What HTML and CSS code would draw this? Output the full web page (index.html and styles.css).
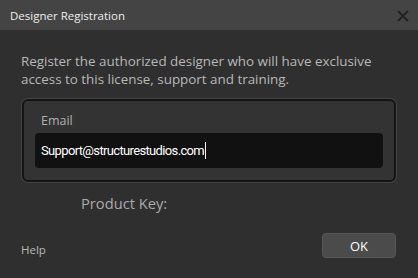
FILE: index.html
```html
<!DOCTYPE html>
<html lang="en">
<head>
  <meta charset="UTF-8" />
  <title>Designer Registration</title>
  <link rel="stylesheet" href="styles.css">
</head>
<body>
  <div class="dialog">
    <!-- Title bar -->
    <div class="titlebar">
      <span class="title">Designer Registration</span>
      <svg class="close" width="12" height="12" viewBox="0 0 12 12">
        <path d="M1 1 L11 11 M11 1 L1 11" stroke="#222" stroke-width="2" fill="none" />
      </svg>
    </div>

    <div class="content">
      <p class="intro">Register the authorized designer who will have exclusive access to this license, support and training.</p>

      <div class="group">
        <div class="label">Email</div>
        <div class="input">Support@structurestudios.com<span class="caret"></span></div>
      </div>

      <div class="product-key">Product Key:</div>

      <div class="footer">
        <span class="help">Help</span>
        <button class="ok">OK</button>
      </div>
    </div>
  </div>
</body>
</html>
```

FILE: styles.css
```css
body {
  margin: 0;
  background-color: #2f2f2f;
  font-family: 'Open Sans', 'Noto Sans', sans-serif;
  overflow: hidden;
}
.dialog {
  width: 418px;
  height: 278px;
  display: flex;
  flex-direction: column;
}
/* Title bar */
.titlebar {
  height: 30px;
  background-color: #444444;
  display: flex;
  align-items: center;
  justify-content: space-between;
  padding: 0 9px 0 10px;
}
.title {
  color: #eeeeee;
  font-size: 11.5px;
}
.close {
  margin-top: 1px;
}
.content {
  flex: 1;
  display: flex;
  flex-direction: column;
  padding: 0 22px 0 21px;
}
.intro {
  margin: 22px 0 0 0;
  color: #b8b8b8;
  font-size: 13.4px;
  line-height: 18px;
}
/* Email group */
.group {
  margin-top: 11px;
  margin-left: 1px;
  height: 79px;
  border: 2px solid #141414;
  border-radius: 6px;
  background-color: #333333;
  box-shadow: 0 0 0 1px #444444;
  padding: 0 11px 0 11px;
  display: flex;
  flex-direction: column;
}
.label {
  margin-top: 11px;
  margin-left: 6px;
  color: #b0b0b0;
  font-size: 12.5px;
  line-height: 18px;
}
.input {
  margin-top: 3px;
  height: 35px;
  background-color: #111111;
  border-radius: 4px;
  color: #ffffff;
  font-family: Roboto, 'Open Sans', sans-serif;
  font-size: 13px;
  letter-spacing: -0.65px;
  display: flex;
  align-items: center;
  padding-left: 6px;
}
.caret {
  display: inline-block;
  width: 1px;
  height: 17px;
  margin-left: 1px;
  background-color: #ffffff;
}
.product-key {
  margin: 11px 0 0 60px;
  color: #aaaaaa;
  font-size: 14.7px;
  line-height: 20px;
}
.footer {
  margin-top: 20px;
  display: flex;
  align-items: flex-start;
  justify-content: space-between;
}
.help {
  color: #b8b8b8;
  font-size: 11.5px;
  line-height: 16px;
  margin-top: 9px;
}
.ok {
  width: 74px;
  height: 25px;
  background-color: #4b4b4b;
  border: 1px solid #575757;
  border-radius: 4px;
  color: #ffffff;
  font-family: 'Open Sans', 'Noto Sans', sans-serif;
  font-size: 13px;
  padding: 0;
}
```
